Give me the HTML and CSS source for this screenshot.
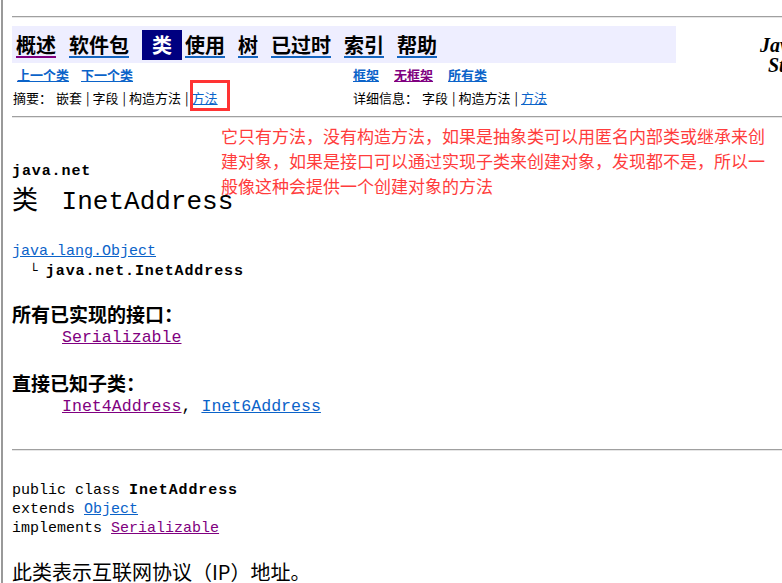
FILE: index.html
```
<!DOCTYPE html>
<html lang="zh-CN">
<head>
<meta charset="utf-8">
<title>InetAddress (Java Platform SE 6)</title>
<link rel="stylesheet" href="styles.css">
</head>
<body>
<div class="frame">
  <hr class="rule top">
  <div class="navrow">
    <div class="navbar">
      <a class="navlink visited" href="#">概述</a>
      <a class="navlink" href="#">软件包</a>
      <span class="navcur">类</span>
      <a class="navlink" href="#">使用</a>
      <a class="navlink" href="#">树</a>
      <a class="navlink" href="#">已过时</a>
      <a class="navlink" href="#">索引</a>
      <a class="navlink" href="#">帮助</a>
    </div>
    <div class="platform">
      <div>Java™ Platform</div>
      <div class="ed">Standard Ed. 6</div>
    </div>
  </div>
  <div class="subnav">
    <div class="subrow">
      <div class="colleft links-left">
        <a class="sublink" href="#">上一个类</a>
        <a class="sublink" href="#">下一个类</a>
      </div>
      <div class="colright links-right">
        <a class="sublink" href="#">框架</a>
        <a class="sublink visited" href="#">无框架</a>
        <a class="sublink" href="#">所有类</a>
      </div>
    </div>
    <div class="subrow">
      <div class="colleft summary"><span class="lbl">摘要：</span>嵌套<span class="sep">|</span>字段<span class="sep">|</span>构造方法<span class="sep">|</span><a class="plain" href="#">方法</a></div>
      <div class="colright summary"><span class="lbl">详细信息：</span>字段<span class="sep">|</span>构造方法<span class="sep">|</span><a class="plain" href="#">方法</a></div>
    </div>
  </div>
  <hr class="rule">
  <div class="pkg">java.net</div>
  <h2 class="title"><span class="kind">类</span> InetAddress</h2>
  <div class="tree">
    <div><a class="link" href="#">java.lang.Object</a></div>
    <div class="sub"><span class="elbow">└</span><b>java.net.InetAddress</b></div>
  </div>
  <dl class="info">
    <dt>所有已实现的接口：</dt>
    <dd><a class="link visited" href="#">Serializable</a></dd>
    <dt class="second">直接已知子类：</dt>
    <dd><a class="link visited" href="#">Inet4Address</a>, <a class="link" href="#">Inet6Address</a></dd>
  </dl>
  <hr class="rule">
  <div class="sig">
    <div>public class <b>InetAddress</b></div>
    <div>extends <a class="link" href="#">Object</a></div>
    <div>implements <a class="link visited" href="#">Serializable</a></div>
  </div>
  <p class="desc">此类表示互联网协议（IP）地址。</p>
</div>
<div class="mark"></div>
<div class="note">它只有方法，没有构造方法，如果是抽象类可以用匿名内部类或继承来创建对象，如果是接口可以通过实现子类来创建对象，发现都不是，所以一般像这种会提供一个创建对象的方法</div>
</body>
</html>
```
FILE: styles.css
```
html, body {
  margin: 0;
  padding: 0;
  background: #ffffff;
  overflow: hidden;
}
body {
  position: relative;
  width: 782px;
  height: 583px;
  font-family: "Noto Sans CJK SC", sans-serif;
  color: #000;
}
.frame {
  margin-left: 1px;
  border-left: 2px solid #999;
  padding: 16px 0 0 9px;
  min-height: 583px;
  box-sizing: border-box;
  overflow: hidden;
}
.rule {
  margin: 0;
  height: 0;
  border: 0;
  border-top: 1px solid #a0a0a0;
  border-bottom: 1px solid #e6e6e6;
  width: 1000px;
}
.navrow {
  margin-top: 8px;
  display: flex;
  align-items: flex-start;
  width: 1100px;
  height: 37px;
}
.navbar {
  flex: none;
  width: 664px;
  height: 37px;
  background: #eeeeff;
  display: flex;
  align-items: center;
  gap: 13px;
  padding-left: 4px;
  box-sizing: border-box;
}
.navlink {
  font-size: 20px;
  font-weight: bold;
  line-height: 24px;
  color: #000;
  text-decoration: underline;
  text-decoration-color: #1565c0;
  text-underline-offset: 3px;
}
.navlink.visited {
  text-decoration-color: #800080;
}
.navcur {
  font-size: 20px;
  font-weight: bold;
  line-height: 30px;
  height: 30px;
  padding: 0 10px;
  margin-right: -10px;
  background: #000080;
  color: #fff;
}
.platform {
  flex: none;
  padding: 9px 0 0 84px;
  font-family: "Liberation Serif", serif;
  font-style: italic;
  font-weight: bold;
  font-size: 20px;
  line-height: 20px;
  white-space: nowrap;
}
.platform .ed {
  padding-left: 8px;
}
.subnav {
  margin-top: 2px;
  margin-bottom: 8px;
}
.subrow {
  display: flex;
  font-size: 13px;
  line-height: 20px;
  white-space: nowrap;
}
.subrow + .subrow {
  margin-top: 3px;
}
.colleft {
  width: 341px;
  flex: none;
  display: flex;
  box-sizing: border-box;
}
.colright {
  display: flex;
}
.links-left {
  padding-left: 5px;
  gap: 12px;
}
.links-right {
  gap: 15px;
}
.summary {
  display: block;
}
.colleft.summary {
  padding-left: 1px;
}
.lbl {
  margin-right: 4px;
}
.sep {
  margin: 0 3px 0 4px;
}
.sublink {
  font-weight: bold;
  color: #0b63c9;
  text-decoration: underline;
}
.sublink.visited {
  color: #800080;
}
.plain {
  color: #0b63c9;
  text-decoration: underline;
}
.pkg {
  margin-top: 44px;
  font-family: "Liberation Mono", "Noto Sans CJK SC", monospace;
  font-size: 15px;
  line-height: 19px;
  font-weight: bold;
  letter-spacing: 0.9px;
}
.title {
  margin: 6px 0 0 0;
  font-family: "Liberation Mono", "Noto Sans CJK SC", monospace;
  font-size: 26px;
  line-height: 30px;
  font-weight: normal;
}
.kind {
  margin-right: 8px;
}
.tree {
  margin-top: 25px;
  font-family: "Liberation Mono", "Noto Sans CJK SC", monospace;
  font-size: 15px;
  line-height: 19px;
}
.tree b {
  letter-spacing: 0.9px;
}
.tree .sub {
  padding-left: 18px;
}
.elbow {
  font-family: "DejaVu Sans Mono", monospace;
  font-size: 13px;
  margin-right: 8px;
}
.link {
  color: #0b63c9;
  text-decoration: underline;
}
.link.visited {
  color: #800080;
}
.info {
  margin: 21px 0 0 0;
}
.info dt {
  font-size: 19px;
  line-height: 24px;
  font-weight: bold;
}
.info dt.second {
  margin-top: 22px;
}
.info dd {
  margin: 1px 0 0 50px;
  font-family: "Liberation Mono", "Noto Sans CJK SC", monospace;
  font-size: 16.6px;
  line-height: 22px;
}
.info + .rule {
  margin-top: 31px;
}
.sig {
  margin-top: 30px;
  font-family: "Liberation Mono", "Noto Sans CJK SC", monospace;
  font-size: 15px;
  line-height: 19px;
}
.sig b {
  letter-spacing: 0.9px;
}
.desc {
  margin: 20px 0 0 0;
  font-size: 20px;
  line-height: 28px;
}
.mark {
  position: absolute;
  left: 190px;
  top: 80px;
  width: 40px;
  height: 31px;
  box-sizing: border-box;
  border: 3px solid #ff3333;
}
.note {
  position: absolute;
  left: 221px;
  top: 123px;
  width: 548px;
  font-size: 17px;
  line-height: 25px;
  color: #ff3c3c;
}
```
